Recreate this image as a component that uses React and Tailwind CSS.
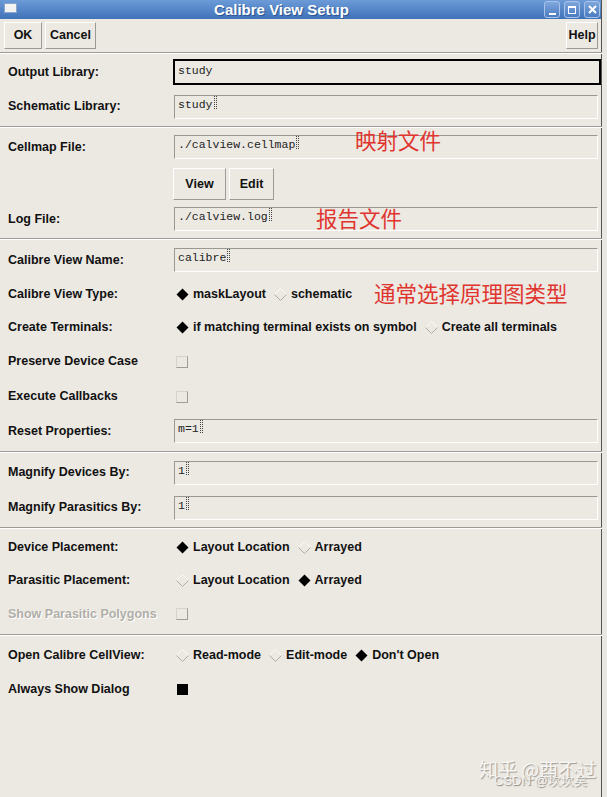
import React from "react";

const labelCls =
  "w-[173px] shrink-0 pl-[8px] text-[12.5px] font-bold text-[#111]";

const Sep = () => (
  <div className="w-[602px] border-t border-[#9d9b96] border-b border-b-white" />
);

const Cursor = () => (
  <span className="ml-[1px] inline-block h-[13px] w-[3px] border-x border-dotted border-[#444] align-middle" />
);

const Field = ({ value, focus }) =>
  focus ? (
    <div className="flex h-[26px] w-[428px] items-start border-2 border-black bg-[#ece9e3] pl-[3px] pt-[1px] font-['Liberation_Mono',monospace] text-[11.5px] text-[#222]">
      {value}
    </div>
  ) : (
    <div className="ml-[1px] flex h-[24px] w-[424px] items-start border border-[#9a9893] border-b-white border-r-white bg-[#ece9e3] pl-[3px] pt-[0px] font-['Liberation_Mono',monospace] text-[11.5px] text-[#222]">
      <span>{value}</span>
      <Cursor />
    </div>
  );

const Diamond = ({ on }) => (
  <svg width="13" height="13" viewBox="0 0 13 13" className="shrink-0">
    {on ? (
      <polygon points="6.5,0.5 12.5,6.5 6.5,12.5 0.5,6.5" fill="#000" />
    ) : (
      <>
        <polyline points="0.5,6.5 6.5,0.5 12.5,6.5" fill="none" stroke="#fbfaf7" strokeWidth="1" />
        <polyline points="0.5,6.5 6.5,12.5 12.5,6.5" fill="none" stroke="#aeaca6" strokeWidth="1" />
      </>
    )}
  </svg>
);

const Radios = ({ items }) => (
  <div className="flex items-center pl-[3px] text-[12.5px] font-bold text-[#111]">
    {items.map(([text, on], i) => (
      <div key={i} className="mr-[8px] flex items-center gap-[4px]">
        <Diamond on={on} />
        <span>{text}</span>
      </div>
    ))}
  </div>
);

const Check = ({ on }) =>
  on ? (
    <div className="ml-[4px] h-[11px] w-[11px] bg-black" />
  ) : (
    <div className="ml-[3px] h-[12px] w-[12px] border border-[#d6d3cd] border-b-[#9e9c97] border-r-[#9e9c97] bg-[#ece9e3]" />
  );

const Row = ({ h, label, disabled, children }) => (
  <div className={"relative flex items-center " + h}>
    <div
      className={
        disabled
          ? labelCls + " text-[#b0aea8] [text-shadow:1px_1px_0_#ffffff]"
          : labelCls
      }
    >
      {label}
    </div>
    {children}
  </div>
);

const Btn = ({ text, w, h }) => (
  <div
    className={
      "flex items-center justify-center border border-white border-b-[#9c9a95] border-r-[#9c9a95] bg-[#ece9e3] text-[12.5px] font-bold text-[#111] " +
      w +
      " " +
      h
    }
  >
    {text}
  </div>
);

const Note = ({ text, className }) => (
  <div
    className={
      "absolute font-['Noto_Sans_CJK_SC',sans-serif] text-[21.5px] leading-none text-[#e0352f] " +
      className
    }
  >
    {text}
  </div>
);

const TitleBtn = ({ children }) => (
  <div className="flex h-[17px] w-[16px] items-center justify-center rounded-[3px] border border-[#a9c4ea] bg-gradient-to-b from-[#7fa6dc] to-[#4a7cc0]">
    {children}
  </div>
);

export default function App() {
  return (
    <div className="h-[797px] w-[607px] overflow-hidden bg-[#e9e7e2] font-['Liberation_Sans',sans-serif]">
      <div className="relative h-[797px] w-[602px] border-r border-[#55534f] bg-[#ece9e3]">
        {/* title bar */}
        <div className="relative flex h-[19px] items-center justify-center bg-gradient-to-b from-[#6d9bd8] to-[#3e72b8] pr-[38px]">
          <div className="absolute left-[4px] top-[3px] h-[10px] w-[13px] border border-[#8aa6cc] bg-[#f2f2f2]" />
          <span className="text-[15px] font-bold leading-none text-white [text-shadow:1px_1px_0_#2c5590]">
            Calibre View Setup
          </span>
          <div className="absolute right-[1px] top-[1px] flex gap-[4px]">
            <TitleBtn>
              <div className="mt-[8px] h-[2px] w-[7px] bg-white" />
            </TitleBtn>
            <TitleBtn>
              <div className="h-[8px] w-[8px] border border-white border-t-2" />
            </TitleBtn>
            <TitleBtn>
              <svg width="9" height="9" viewBox="0 0 9 9">
                <path d="M1 1 L8 8 M8 1 L1 8" stroke="#fff" strokeWidth="2" />
              </svg>
            </TitleBtn>
          </div>
        </div>

        {/* toolbar */}
        <div className="flex h-[33px] items-start pt-[3px]">
          <div className="ml-[4px] flex gap-[3px]">
            <Btn text="OK" w="w-[38px]" h="h-[27px]" />
            <Btn text="Cancel" w="w-[51px]" h="h-[27px]" />
          </div>
          <div className="ml-auto mr-[3px]">
            <Btn text="Help" w="w-[32px]" h="h-[27px]" />
          </div>
        </div>
        <Sep />

        {/* libraries */}
        <div className="pb-[2px] pt-[1px]">
          <Row h="h-[34px]" label="Output Library:">
            <Field value="study" focus />
          </Row>
          <Row h="h-[35px]" label="Schematic Library:">
            <Field value="study" />
          </Row>
        </div>
        <Sep />

        {/* files */}
        <div className="pb-[2px]">
          <Row h="h-[38px]" label="Cellmap File:">
            <Field value="./calview.cellmap" />
            <Note text="映射文件" className="left-[355px] top-[1px]" />
          </Row>
          <Row h="h-[36px]" label="">
            <div className="flex gap-[3px]">
              <Btn text="View" w="w-[53px]" h="h-[32px]" />
              <Btn text="Edit" w="w-[45px]" h="h-[32px]" />
            </div>
          </Row>
          <Row h="h-[34px]" label="Log File:">
            <Field value="./calview.log" />
            <Note text="报告文件" className="left-[316px] top-[5px]" />
          </Row>
        </div>
        <Sep />

        {/* view setup */}
        <div className="pb-[3px] pt-[3px]">
          <Row h="h-[34px]" label="Calibre View Name:">
            <Field value="calibre" />
          </Row>
          <Row h="h-[34px]" label="Calibre View Type:">
            <Radios items={[["maskLayout", true], ["schematic", false]]} />
            <Note text="通常选择原理图类型" className="left-[374px] top-[5px]" />
          </Row>
          <Row h="h-[33px]" label="Create Terminals:">
            <Radios
              items={[
                ["if matching terminal exists on symbol", true],
                ["Create all terminals", false],
              ]}
            />
          </Row>
          <Row h="h-[35px]" label="Preserve Device Case">
            <Check />
          </Row>
          <Row h="h-[35px]" label="Execute Callbacks">
            <Check />
          </Row>
          <Row h="h-[34px]" label="Reset Properties:">
            <Field value="m=1" />
          </Row>
        </div>
        <Sep />

        {/* magnify */}
        <div className="pb-[2px] pt-[2px]">
          <Row h="h-[35px]" label="Magnify Devices By:">
            <Field value="1" />
          </Row>
          <Row h="h-[35px]" label="Magnify Parasitics By:">
            <Field value="1" />
          </Row>
        </div>
        <Sep />

        {/* placement */}
        <div className="pb-[3px] pt-[1px]">
          <Row h="h-[34px]" label="Device Placement:">
            <Radios items={[["Layout Location", true], ["Arrayed", false]]} />
          </Row>
          <Row h="h-[33px]" label="Parasitic Placement:">
            <Radios items={[["Layout Location", false], ["Arrayed", true]]} />
          </Row>
          <Row h="h-[34px]" label="Show Parasitic Polygons" disabled>
            <Check />
          </Row>
        </div>
        <Sep />

        {/* open */}
        <div className="pt-[2px]">
          <Row h="h-[34px]" label="Open Calibre CellView:">
            <Radios
              items={[
                ["Read-mode", false],
                ["Edit-mode", false],
                ["Don't Open", true],
              ]}
            />
          </Row>
          <Row h="h-[34px]" label="Always Show Dialog">
            <Check on />
          </Row>
        </div>

        {/* watermark */}
        <div className="absolute left-[479px] top-[759px] font-['Noto_Sans_CJK_SC',sans-serif] text-[19px] leading-none text-[#f7f6f3] [text-shadow:1px_1px_1px_#9a9893]">
          知乎 @酉不过
        </div>
        <div className="absolute left-[494px] top-[774px] text-[13px] leading-none text-[#f4f3ef] [text-shadow:1px_1px_1px_#8a8883]">
          CSDN @坎坎矣
        </div>
      </div>
    </div>
  );
}
